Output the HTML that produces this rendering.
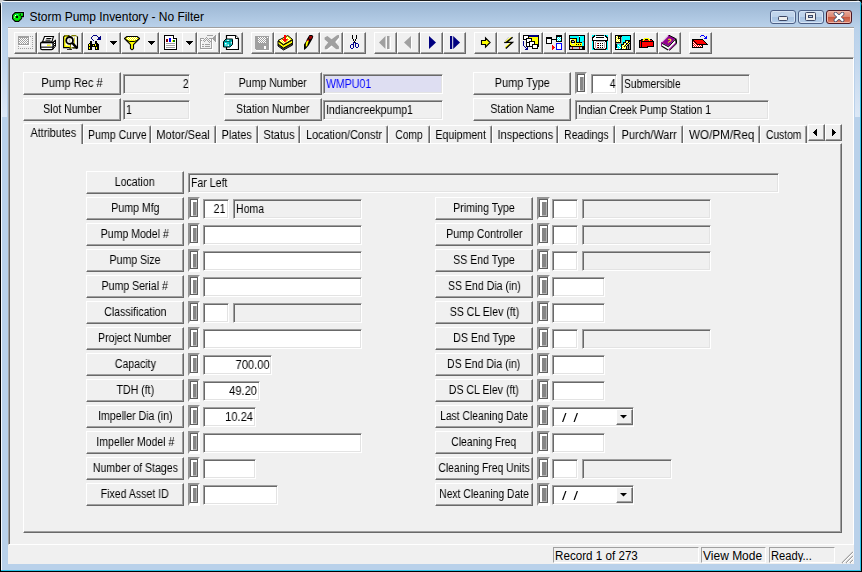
<!DOCTYPE html>
<html><head><meta charset="utf-8"><title>Storm Pump Inventory - No Filter</title>
<style>
html,body{margin:0;padding:0}
body{width:862px;height:572px;overflow:hidden;background:#000;position:relative;font-family:"Liberation Sans",sans-serif;font-size:12px;color:#000}
div{position:absolute;box-sizing:border-box}
.t{display:inline-block;white-space:pre;will-change:transform}
#frame{left:0;top:0;width:862px;height:572px;background:#b9d1ea;border-radius:6px 6px 0 0;overflow:hidden}
#cap{left:0;top:0;width:862px;height:27px;background:linear-gradient(#99b4d1,#b9d1ea)}
#title{left:29.5px;letter-spacing:-0.03px;top:10px;line-height:15px;font-size:12px;white-space:pre}
#client{left:8px;top:27px;width:846px;height:537px;background:#f0f0f0}
.btn{background:#f0f0f0;border-top:1px solid #fff;border-left:1px solid #fff;border-right:1px solid #696969;border-bottom:1px solid #696969;box-shadow:inset -1px -1px 0 #a0a0a0}
.bl{left:0;right:0;height:21px;line-height:21px;display:flex;justify-content:center;white-space:pre}
.fld{border-top:1px solid #a0a0a0;border-left:1px solid #a0a0a0;border-right:1px solid #fff;border-bottom:1px solid #fff;box-shadow:inset 1px 1px 0 #696969,inset -1px -1px 0 #e3e3e3;overflow:hidden}
.ft{top:1px;line-height:16px;height:16px;white-space:pre}
.ind{width:12px;height:22px;border-top:2px solid #949494;border-left:2px solid #949494;border-right:2px solid #fff;border-bottom:2px solid #fff;background:#f0f0f0}
.ind i{position:absolute;left:0;top:0;width:8px;height:18px;background:#868686;border:1px solid #606060;box-shadow:inset 2px 2px 0 #fff,inset -1px -1px 0 #b4b4b4;box-sizing:border-box}
.cbtn{right:0;top:1px;width:17px;height:16px;background:#f0f0f0;border-top:1px solid #fff;border-left:1px solid #fff;border-right:1px solid #696969;border-bottom:1px solid #696969;box-shadow:inset -1px -1px 0 #a0a0a0}
.cbtn svg{position:absolute;left:3px;top:5px}
.tbb{background:#f0f0f0;border-top:1px solid #fff;border-left:1px solid #fff;border-right:1px solid #696969;border-bottom:1px solid #696969;box-shadow:inset -1px -1px 0 #a0a0a0}
.tab{border-radius:2px 2px 0 0;border-top:1px solid #fff;border-left:1px solid #fff;border-right:1px solid #696969;box-shadow:inset -1px 0 0 #a0a0a0;background:#f0f0f0}
.tabsel{border-radius:2px 2px 0 0;border-top:1px solid #fff;border-left:1px solid #fff;border-right:1px solid #696969;box-shadow:inset -1px 0 0 #a0a0a0;background:#f0f0f0;z-index:3}
.tl{left:0;right:0;height:14px;line-height:14px;display:flex;justify-content:center;white-space:pre;overflow:hidden}
#page{left:23px;top:143px;width:819px;height:390px;border-top:1px solid #fff;border-left:1px solid #fff;border-right:1px solid #696969;border-bottom:1px solid #696969;box-shadow:inset -1px -1px 0 #a0a0a0;background:#f0f0f0}
#mdi{left:8px;top:57px;width:846px;height:488px;border-top:1px solid #a0a0a0;border-left:1px solid #a0a0a0;border-right:1px solid #fff;border-bottom:1px solid #fff;box-shadow:inset 1px 1px 0 #696969;background:#f0f0f0}
.sp{top:547px;height:16px;border-top:1px solid #a0a0a0;border-left:1px solid #a0a0a0;border-right:1px solid #fff;border-bottom:1px solid #fff;line-height:14px;white-space:pre;overflow:hidden}
.sp span{position:absolute;left:1px;top:1px;transform:scaleX(.97);transform-origin:left center}
.cb{top:10px;width:26px;height:14px;border-radius:3px}
.ic{position:absolute;left:2px;top:2px}
</style></head><body>
<svg width="0" height="0" style="position:absolute"><defs>
<pattern id="ckw" width="2" height="2" patternUnits="userSpaceOnUse"><rect width="1" height="1" fill="#fff"/><rect x="1" y="1" width="1" height="1" fill="#fff"/></pattern>
<pattern id="ckw2" width="2" height="2" patternUnits="userSpaceOnUse"><rect x="1" width="1" height="1" fill="#fff"/><rect y="1" width="1" height="1" fill="#fff"/></pattern>
<pattern id="ckgr" width="2" height="2" patternUnits="userSpaceOnUse"><rect width="1" height="1" fill="#a0a0a0"/><rect x="1" y="1" width="1" height="1" fill="#a0a0a0"/></pattern>
<pattern id="ckr" width="2" height="2" patternUnits="userSpaceOnUse"><rect width="2" height="2" fill="#f00"/><rect width="1" height="1" fill="#fff"/><rect x="1" y="1" width="1" height="1" fill="#fff"/></pattern>
<pattern id="cky" width="2" height="2" patternUnits="userSpaceOnUse"><rect width="2" height="2" fill="#ff0"/><rect width="1" height="1" fill="#fff"/><rect x="1" y="1" width="1" height="1" fill="#fff"/></pattern>
<pattern id="ckc" width="2" height="2" patternUnits="userSpaceOnUse"><rect width="2" height="2" fill="#0ff"/><rect width="1" height="1" fill="#fff"/><rect x="1" y="1" width="1" height="1" fill="#fff"/></pattern>
<pattern id="ckg" width="2" height="2" patternUnits="userSpaceOnUse"><rect width="2" height="2" fill="#fff"/><rect width="1" height="1" fill="#000"/><rect x="1" y="1" width="1" height="1" fill="#000"/></pattern>
</defs></svg>
<div style="left:0;top:0;width:5px;height:3px;background:#d0d0d0"></div>
<div id="frame">
<div id="cap"></div>
<div style="left:0;top:0;width:862px;height:1px;background:#1c1c1c"></div>
<div style="left:0;top:0;width:1px;height:572px;background:#000"></div>
<div style="left:1px;top:1px;width:860px;height:1px;background:#f4f8fc"></div>
<div style="left:1px;top:1px;width:1px;height:570px;background:#f4f8fc"></div>
<div style="left:860px;top:2px;width:1px;height:569px;background:#2cc4e8"></div>
<div style="left:861px;top:0;width:1px;height:572px;background:#000"></div>
<div style="left:1px;top:570px;width:860px;height:1px;background:#2cc4e8"></div>
<div style="left:0;top:571px;width:862px;height:1px;background:#000"></div>
<div style="left:2px;top:27px;width:5px;height:90px;background:linear-gradient(#b9d1ea,#c4d8ee 40%,#dde8f6)"></div>
<div style="left:855px;top:27px;width:5px;height:90px;background:linear-gradient(#b9d1ea,#c4d8ee 40%,#dde8f6)"></div>
<svg style="position:absolute;left:11px;top:11px" width="14" height="12" viewBox="-1 -1 14 12"><path d="M0.6 3.2L3.2 0.6H11.4V4.6H9.6V6.4L6.6 9.4H3.2L0.6 6.8Z" fill="none" stroke="#c4dcf4" stroke-width="2.6" stroke-linejoin="round" opacity=".7"/><path d="M0.6 3.2L3.2 0.6H11.4V4.6H9.6V6.4L6.6 9.4H3.2L0.6 6.8Z" fill="#00f000" stroke="#000" stroke-width="1.2" stroke-linejoin="miter"/><path d="M8.8 2.2L7.6 3.2L8.8 4" fill="none" stroke="#000" stroke-width="1"/><path d="M6.5 8.8L9 6.2V4.8" fill="none" stroke="#00a000" stroke-width="1"/><rect x="4" y="4" width="2" height="2" fill="#000"/><rect x="3" y="3" width="1" height="1" fill="#fff"/><rect x="2" y="4.6" width="1" height="1" fill="#f8d8f0"/><rect x="4.6" y="2" width="1.2" height="1" fill="#30e0ff"/><rect x="9.4" y="1.4" width="1" height="1" fill="#40ff80"/></svg>
<div id="title">Storm Pump Inventory - No Filter</div>
<div class="cb" style="left:770px;border:1px solid #4b5f86;background:linear-gradient(#c3d6ed 0,#bfd3eb 50%,#a8c3e2 50%,#b4cde9 100%);box-shadow:inset 0 0 0 1px #d6e4f5"><div style="left:7px;top:5px;width:10px;height:5px;border:1px solid #3c4664;border-radius:1.5px;background:#eeeeee"></div></div>
<div class="cb" style="left:798px;border:1px solid #4b5f86;background:linear-gradient(#c3d6ed 0,#bfd3eb 50%,#a8c3e2 50%,#b4cde9 100%);box-shadow:inset 0 0 0 1px #d6e4f5"><div style="left:6px;top:1px;width:11px;height:9px;border:1px solid #3c4664;border-radius:1.5px;background:#eeeeee"><div style="left:2px;top:2px;width:5px;height:3px;border:1px solid #3c4664;background:#b8cfea"></div></div></div>
<div class="cb" style="left:826px;border:1px solid #4a1622;background:linear-gradient(#e9a898 0,#dd8672 50%,#c9553b 50%,#da8068 100%);box-shadow:inset 0 0 0 1px #f0b8aa"><svg style="position:absolute;left:6px;top:1px" width="12" height="10" viewBox="0 0 12 10"><path d="M2.6 1.8L9.4 8.2M9.4 1.8L2.6 8.2" stroke="#46506e" stroke-width="3.9" stroke-linecap="round"/><path d="M2.6 1.8L9.4 8.2M9.4 1.8L2.6 8.2" stroke="#fff" stroke-width="2.3" stroke-linecap="round"/></svg></div>
</div>
<div id="client"></div>
<div style="left:8px;top:27px;width:846px;height:1px;background:#a0a0a0"></div>
<div style="left:8px;top:28px;width:846px;height:1px;background:#fff"></div>
<div class="tbb" style="left:14px;top:32px;width:23px;height:22px"><svg class="ic" width="16" height="16" viewBox="0 0 16 16" shape-rendering="crispEdges" ><rect x="2" y="2" width="11" height="9" fill="#fff"/><rect x="1" y="1" width="11" height="9" fill="#a0a0a0"/><rect x="2" y="3" width="9" height="6" fill="url(#ckw2)"/><rect x="15" y="1" width="1" height="1" fill="#a0a0a0"/><rect x="14" y="1" width="1" height="1" fill="#a0a0a0" opacity=".0"/><rect x="15" y="3" width="1" height="1" fill="#a0a0a0"/><rect x="14" y="3" width="1" height="1" fill="#a0a0a0" opacity=".0"/><rect x="15" y="5" width="1" height="1" fill="#a0a0a0"/><rect x="14" y="5" width="1" height="1" fill="#a0a0a0" opacity=".0"/><rect x="15" y="7" width="1" height="1" fill="#a0a0a0"/><rect x="14" y="7" width="1" height="1" fill="#a0a0a0" opacity=".0"/><rect x="15" y="9" width="1" height="1" fill="#a0a0a0"/><rect x="14" y="9" width="1" height="1" fill="#a0a0a0" opacity=".0"/><rect x="15" y="11" width="1" height="1" fill="#a0a0a0"/><rect x="14" y="11" width="1" height="1" fill="#a0a0a0" opacity=".0"/><rect x="15" y="13" width="1" height="1" fill="#a0a0a0"/><rect x="14" y="13" width="1" height="1" fill="#a0a0a0" opacity=".0"/><rect x="1" y="13" width="1" height="1" fill="#a0a0a0"/><rect x="3" y="13" width="1" height="1" fill="#a0a0a0"/><rect x="5" y="13" width="1" height="1" fill="#a0a0a0"/><rect x="7" y="13" width="1" height="1" fill="#a0a0a0"/><rect x="9" y="13" width="1" height="1" fill="#a0a0a0"/><rect x="11" y="13" width="1" height="1" fill="#a0a0a0"/><rect x="13" y="13" width="1" height="1" fill="#a0a0a0"/><rect x="15" y="13" width="1" height="1" fill="#a0a0a0"/><rect x="1" y="11" width="1" height="1" fill="#a0a0a0"/><rect x="13" y="1" width="1" height="1" fill="#a0a0a0"/></svg></div>
<div class="tbb" style="left:37px;top:32px;width:23px;height:22px"><svg class="ic" width="16" height="16" viewBox="0 0 16 16"><path d="M4.5 1.5H13.5L11.8 7H2.5Z" fill="#fff" stroke="#000" stroke-width="1.1"/><path d="M6.3 3.5H11.3M5.5 5.2H10.5" stroke="#000" stroke-width="1"/><path d="M12.8 7.3L15.5 5V11L12.8 14.3Z" fill="url(#ckg)" stroke="#000" stroke-width="1"/><rect x="0.6" y="7" width="12.4" height="7.6" rx="1.6" fill="#fff" stroke="#000" stroke-width="1.2"/><rect x="1" y="7" width="12" height="1.3" fill="#000"/><rect x="1" y="11.6" width="12" height="1.1" fill="#000"/><rect x="7" y="9.6" width="3.6" height="1.3" fill="#ff0"/><rect x="7" y="9.2" width="3.6" height=".5" fill="#c0c0c0"/></svg></div>
<div class="tbb" style="left:60px;top:32px;width:23px;height:22px"><svg class="ic" width="16" height="16" viewBox="0 0 16 16"><path d="M0.6 1.8L2 0.6H5.5L7.5 1.8V13.6L6 12.6H0.6Z" fill="#ff0" stroke="#000" stroke-width="1.1"/><path d="M2.6 2V10.6H7V2.5Z" fill="#fff"/><path d="M7.5 1.8L9 0.6H12.8L14.4 1.8V12.6H9L7.5 13.6Z" fill="#fff" stroke="#808000" stroke-width="1"/><path d="M14.5 1.5V13H9.5" fill="none" stroke="#000" stroke-width="1.1"/><path d="M1.5 0.6H5.5M9 0.6H12.8" stroke="#808000" stroke-width="1.2"/><path d="M11.5 2.5V11" stroke="#c8c800" stroke-width=".8"/><circle cx="6.6" cy="5.4" r="3.4" fill="#fff" fill-opacity=".85" stroke="#000" stroke-width="1.8"/><path d="M6.3 3.5V7.2" stroke="#b0b0b0" stroke-width="1"/><path d="M9.3 8L14.3 13.4" stroke="#000" stroke-width="2.4"/><path d="M4 14.5H9" stroke="#000" stroke-width=".8"/></svg></div>
<div class="tbb" style="left:83px;top:32px;width:38px;height:22px"><svg class="ic" width="16" height="16" viewBox="0 0 16 16" shape-rendering="crispEdges" ><rect x="4" y="6" width="2" height="2" fill="#000"/><rect x="9" y="6" width="2" height="2" fill="#000"/><rect x="3" y="8" width="3" height="1" fill="#000"/><rect x="2" y="9" width="4" height="6" fill="#000"/><rect x="9" y="8" width="3" height="1" fill="#000"/><rect x="9" y="9" width="4" height="6" fill="#000"/><rect x="6" y="9" width="3" height="3" fill="#000"/><rect x="3" y="9" width="1" height="2" fill="#ff0"/><rect x="3" y="12" width="1" height="2" fill="#ff0"/><rect x="7" y="10" width="1" height="1" fill="#ff0"/><rect x="9" y="9" width="1" height="2" fill="#ff0"/><rect x="10" y="12" width="1" height="2" fill="#ff0"/><rect x="7" y="0" width="4" height="1" fill="#000080"/><rect x="6" y="1" width="1" height="1" fill="#000080"/><rect x="5" y="2" width="1" height="2" fill="#000080"/><rect x="6" y="4" width="1" height="1" fill="#000080"/><rect x="7" y="5" width="1" height="1" fill="#000080"/><rect x="11" y="1" width="1" height="1" fill="#000080"/><rect x="12" y="2" width="1" height="1" fill="#000080"/><rect x="14" y="1" width="1" height="1" fill="#000080"/><rect x="13" y="2" width="2" height="1" fill="#000080"/><rect x="12" y="3" width="3" height="1" fill="#000080"/><rect x="11" y="4" width="4" height="1" fill="#000080"/></svg><div style="left:22px;top:0;width:1px;height:19px;background:#fff"></div><svg style="position:absolute;left:26px;top:8px" width="7" height="4" viewBox="0 0 7 4" shape-rendering="crispEdges"><path d="M0 0h7v1h-1v1h-1v1h-1v1h-1v-1h-1v-1h-1v-1h-1z" fill="#000"/></svg></div>
<div class="tbb" style="left:121px;top:32px;width:38px;height:22px"><svg class="ic" width="16" height="16" viewBox="0 0 16 16"><path d="M0.5 3.5L3 1.5L13 1.5L15.6 3.5L9.5 9.6L9.5 13.6L8.3 14.6L7.7 14.6L6.5 13.6L6.5 9.6Z" fill="#ff0" stroke="#000" stroke-width="1.15" stroke-linejoin="round"/><rect x="3" y="2" width="10" height="3" fill="url(#cky)"/><path d="M1.3 4.4L3.5 5.5L5.3 6.5L10.7 6.5L12.5 5.5L14.7 4.4" fill="none" stroke="#000" stroke-width="1"/></svg><div style="left:22px;top:0;width:1px;height:19px;background:#fff"></div><svg style="position:absolute;left:26px;top:8px" width="7" height="4" viewBox="0 0 7 4" shape-rendering="crispEdges"><path d="M0 0h7v1h-1v1h-1v1h-1v1h-1v-1h-1v-1h-1v-1h-1z" fill="#000"/></svg></div>
<div class="tbb" style="left:159px;top:32px;width:38px;height:22px"><svg class="ic" width="16" height="16" viewBox="0 0 16 16" shape-rendering="crispEdges" ><g transform="translate(2,0)"><path d="M0.5 0.5H9.5L12.5 3.5V14.5H0.5Z" fill="#fff" stroke="#000"/><path d="M9.5 0.5V3.5H12.5" fill="#fff" stroke="#000"/><rect x="2" y="4" width="2" height="3" fill="#800000"/><rect x="5" y="3" width="2" height="4" fill="#00f"/><rect x="8" y="5" width="1" height="2" fill="#ff0"/><rect x="9" y="5" width="2" height="2" fill="#008000"/><rect x="2" y="8" width="9" height="1" fill="#a0a0a0"/><rect x="2" y="10" width="9" height="1" fill="#a0a0a0"/><rect x="2" y="12" width="9" height="1" fill="#a0a0a0"/></g></svg><div style="left:22px;top:0;width:1px;height:19px;background:#fff"></div><svg style="position:absolute;left:26px;top:8px" width="7" height="4" viewBox="0 0 7 4" shape-rendering="crispEdges"><path d="M0 0h7v1h-1v1h-1v1h-1v1h-1v-1h-1v-1h-1v-1h-1z" fill="#000"/></svg></div>
<div class="tbb" style="left:197px;top:32px;width:23px;height:22px"><svg class="ic" width="16" height="16" viewBox="0 0 16 16" shape-rendering="crispEdges" style="overflow:visible"><rect x="1.5" y="4.5" width="11" height="10" fill="none" stroke="#fff"/><rect x="0.5" y="3.5" width="11" height="10" fill="none" stroke="#a0a0a0"/><rect x="2" y="9" width="2" height="1" fill="#a0a0a0"/><rect x="5" y="9" width="5" height="1" fill="#a0a0a0"/><rect x="2" y="11" width="2" height="1" fill="#a0a0a0"/><rect x="5" y="11" width="5" height="1" fill="#a0a0a0"/><path d="M1.5 5.5L6.5 0.8L11.2 6.2L8.8 8.2L6.5 5.2L3.8 7.8Z" fill="#f0f0f0"/><path d="M1.5 5.5L6.5 0.8L11.2 6.2L8.8 8.2L6.5 5.2L3.8 7.8Z" fill="url(#ckgr)"/><rect x="7" y="0" width="6" height="1" fill="#a0a0a0"/><path d="M16.5 1V8L13.7 4.5Z" fill="#fff"/><path d="M16 -0.4V7.4L12.2 3.5Z" fill="#a0a0a0"/></svg></div>
<div class="tbb" style="left:220px;top:32px;width:23px;height:22px"><svg class="ic" width="16" height="16" viewBox="0 0 16 16"><path d="M3.5 0.5H12.5L15.5 3.5V14.5H3.5Z" fill="#fff" stroke="#000" stroke-width="1.2"/><path d="M12.5 0.5V3.5H15.5" fill="#fff" stroke="#000"/><path d="M0.5 6.5L3 4H9.5V9.5L7 12H0.5Z" fill="#00c8c8" stroke="#000" stroke-width="1"/><path d="M0.5 6.5H7V12M7 6.5L9.5 4" fill="none" stroke="#006868" stroke-width="1"/><rect x="2" y="8" width="1.5" height="1.5" fill="#fff"/><rect x="4.5" y="9.5" width="1.5" height="1.5" fill="#fff"/><rect x="4" y="4.8" width="2" height="1" fill="#fff"/><rect x="7.8" y="7" width="1" height="1.5" fill="#fff"/><rect x="2.5" y="10.2" width="1" height="1" fill="#e0ffff"/></svg></div>
<div class="tbb" style="left:251px;top:32px;width:23px;height:22px"><svg class="ic" width="16" height="16" viewBox="0 0 16 16" shape-rendering="crispEdges" ><rect x="2" y="2" width="14" height="14" fill="#fff"/><path d="M1 1H15V15H2L1 14Z" fill="#a0a0a0"/><rect x="4" y="2" width="8" height="6" fill="url(#ckw)"/><rect x="13" y="2" width="1" height="1" fill="#fff"/><rect x="10" y="11" width="2" height="3" fill="#fff"/></svg></div>
<div class="tbb" style="left:274px;top:32px;width:23px;height:22px"><svg class="ic" width="16" height="16" viewBox="0 0 16 16"><path d="M1 9L6.5 13L15.6 8V10L6.5 15L1 11Z" fill="#a0a0a0" stroke="#000" stroke-width="1"/><path d="M1 10L6.5 14L15.6 9" fill="none" stroke="#000" stroke-width=".7"/><path d="M1 6L6.5 10L15.6 5V8L6.5 13L1 9Z" fill="#ff0" stroke="#000" stroke-width="1"/><path d="M1 5.5L10.8 0.6L15.6 4.5L6.5 9.6Z" fill="#ff0" stroke="#000" stroke-width="1"/><path d="M2.5 5.6L10.6 1.6L14.2 4.5L6.6 8.6Z" fill="url(#cky)"/><path d="M7 0H9V4H11.2L8 7.6L4.8 4H7Z" fill="#f00"/></svg></div>
<div class="tbb" style="left:297px;top:32px;width:23px;height:22px"><svg class="ic" width="16" height="16" viewBox="0 0 16 16"><path d="M4 15L4 9.5L6 6.5L7 4L8.5 1.5L9.5 0L12.2 0L13.3 1.5L12.6 3.6L10.6 7L8.6 10.5L6 13.6Z" fill="#000"/><path d="M9.3 1L12.3 1L12 3L10.4 4.6L8.8 3.6Z" fill="#9a0000"/><path d="M7.6 4.4L9.2 4.8L8.6 6.2L7 6Z" fill="#f00"/><path d="M6.8 6L8.8 5.7L8.2 7.6L7 11.2L5.8 11.4L5.9 8Z" fill="#ff0"/></svg></div>
<div class="tbb" style="left:320px;top:32px;width:23px;height:22px"><svg class="ic" width="16" height="16" viewBox="0 0 16 16"><g transform="translate(1,1)"><path d="M1.6 2.4L4.4 1L8.6 4.3L14 0.2L16.4 -0.2L16.2 2.2L12.2 7L16 11.6L15.8 14.2L13.2 14.2L8.6 10.6L4 14.2L1.8 14.2L1.8 11.8L5.2 7.6L1.6 4.4Z" fill="#fff" /></g><path d="M1.6 2.4L4.4 1L8.6 4.3L14 0.2L16.4 -0.2L16.2 2.2L12.2 7L16 11.6L15.8 14.2L13.2 14.2L8.6 10.6L4 14.2L1.8 14.2L1.8 11.8L5.2 7.6L1.6 4.4Z" fill="#a0a0a0" /></svg></div>
<div class="tbb" style="left:343px;top:32px;width:23px;height:22px"><svg class="ic" width="16" height="16" viewBox="0 0 16 16" shape-rendering="crispEdges" ><rect x="6" y="0" width="1" height="4" fill="#000"/><rect x="7" y="4" width="1" height="2" fill="#000"/><rect x="8" y="6" width="1" height="2" fill="#000"/><rect x="10" y="0" width="1" height="4" fill="#000"/><rect x="9" y="4" width="1" height="2" fill="#000"/><rect x="7" y="7" width="1" height="6" fill="#000090"/><rect x="5" y="9" width="2" height="1" fill="#000090"/><rect x="4" y="10" width="1" height="3" fill="#000090"/><rect x="5" y="13" width="2" height="1" fill="#000090"/><rect x="9" y="7" width="1" height="5" fill="#000090"/><rect x="10" y="8" width="2" height="1" fill="#000090"/><rect x="12" y="9" width="1" height="3" fill="#000090"/><rect x="10" y="12" width="2" height="1" fill="#000090"/></svg></div>
<div class="tbb" style="left:374px;top:32px;width:23px;height:22px"><svg class="ic" width="16" height="16" viewBox="0 0 16 16"><path d="M3 8.5L9.5 2V15Z" fill="#fff"/><rect x="11" y="2" width="3" height="13" fill="#fff"/><path d="M2 7.5L8.5 1V14Z" fill="#a0a0a0"/><rect x="10" y="1" width="2.5" height="13" fill="#a0a0a0"/></svg></div>
<div class="tbb" style="left:397px;top:32px;width:23px;height:22px"><svg class="ic" width="16" height="16" viewBox="0 0 16 16"><path d="M5 8.5L12 2V15Z" fill="#fff"/><path d="M4 7.5L11 1V14Z" fill="#a0a0a0"/></svg></div>
<div class="tbb" style="left:420px;top:32px;width:23px;height:22px"><svg class="ic" width="16" height="16" viewBox="0 0 16 16"><path d="M6 1L13 7.5L6 14Z" fill="#000080"/></svg></div>
<div class="tbb" style="left:443px;top:32px;width:23px;height:22px"><svg class="ic" width="16" height="16" viewBox="0 0 16 16"><rect x="4" y="1" width="2.2" height="13" fill="#000080"/><path d="M7.2 1L14 7.5L7.2 14Z" fill="#000080"/></svg></div>
<div class="tbb" style="left:474px;top:32px;width:23px;height:22px"><svg class="ic" width="16" height="16" viewBox="0 0 16 16"><path d="M4.5 5.5H8.5V2.9L13.1 7.5L8.5 12.1V9.5H4.5Z" fill="#ff0" stroke="#000" stroke-width="1.1"/></svg></div>
<div class="tbb" style="left:497px;top:32px;width:23px;height:22px"><svg class="ic" width="16" height="16" viewBox="0 0 16 16"><path d="M8.8 2L5 6" fill="none" stroke="#c8c8c8" stroke-width=".9"/><path d="M11.4 2.4L5.6 6.8M10.6 8L5.4 12.4" fill="none" stroke="#ff0" stroke-width="1.3"/><path d="M12.6 2.2L6.4 7.4H12.4L5.8 13.4" fill="none" stroke="#000" stroke-width="1.4" stroke-linejoin="miter"/><path d="M4.2 7.5H7" stroke="#000" stroke-width="1.2"/></svg></div>
<div class="tbb" style="left:520px;top:32px;width:23px;height:22px"><svg class="ic" width="16" height="16" viewBox="0 0 16 16" shape-rendering="crispEdges" ><rect x="5" y="0" width="11" height="12" fill="#000"/><rect x="6" y="0" width="9" height="2" fill="#000080"/><rect x="6" y="2" width="9" height="7" fill="#ff0"/><rect x="0" y="0" width="6" height="5" fill="#000"/><rect x="1" y="1" width="4" height="3" fill="#fff"/><rect x="3" y="3" width="6" height="5" fill="#000"/><rect x="4" y="4" width="4" height="3" fill="#fff"/><rect x="3" y="7" width="4" height="5" fill="#000"/><rect x="4" y="8" width="2" height="3" fill="#fff"/><rect x="6" y="6" width="6" height="6" fill="#000"/><rect x="7" y="7" width="4" height="4" fill="#fff"/><rect x="9" y="9" width="6" height="5" fill="#000"/><rect x="10" y="10" width="4" height="3" fill="#fff"/><rect x="0" y="6" width="1" height="5" fill="#000090"/><rect x="1" y="11" width="1" height="1" fill="#000090"/><rect x="2" y="12" width="1" height="1" fill="#000090"/><rect x="3" y="13" width="1" height="1" fill="#000090"/><rect x="2" y="14" width="3" height="1" fill="#000090"/><rect x="4" y="12" width="1" height="2" fill="#000090"/></svg></div>
<div class="tbb" style="left:543px;top:32px;width:23px;height:22px"><svg class="ic" width="16" height="16" viewBox="0 0 16 16" shape-rendering="crispEdges" ><rect x="0" y="2" width="6" height="7" fill="#000"/><rect x="1" y="4" width="4" height="4" fill="#fff"/><rect x="6" y="4" width="4" height="1" fill="#000"/><rect x="10" y="0" width="6" height="7" fill="#000"/><rect x="11" y="2" width="4" height="4" fill="url(#ckc)"/><rect x="10" y="8" width="6" height="7" fill="#00f"/><rect x="11" y="9" width="4" height="5" fill="#fff"/><path d="M6 10L9 12.5L6 15Z" fill="#f00"/></svg></div>
<div class="tbb" style="left:566px;top:32px;width:23px;height:22px"><svg class="ic" width="16" height="16" viewBox="0 0 16 16" shape-rendering="crispEdges" ><rect x="0" y="0" width="16" height="15" fill="#000"/><rect x="1" y="1" width="14" height="2" fill="#0ff"/><rect x="8" y="3" width="2" height="4" fill="#0ff"/><rect x="11" y="3" width="2" height="4" fill="#0ff"/><rect x="13" y="3" width="2" height="8" fill="#0ff"/><rect x="10" y="1" width="1" height="6" fill="#000"/><rect x="10" y="1" width="1" height="1" fill="#fff"/><rect x="1" y="4" width="6" height="7" fill="#ff0"/><rect x="7" y="8" width="1" height="3" fill="#ff0"/><rect x="8" y="8" width="5" height="3" fill="#ff0"/><rect x="1" y="10" width="1" height="1" fill="#000"/><rect x="2" y="5" width="4" height="3" fill="#000"/><rect x="3" y="6" width="2" height="1" fill="#c0c0c0"/><rect x="5" y="5" width="1" height="1" fill="#c0c0c0"/><rect x="1" y="4" width="2" height="1" fill="#fff"/><rect x="1" y="5" width="1" height="1" fill="#fff"/><rect x="3" y="8" width="2" height="1" fill="#e0e0ff"/><rect x="7" y="9" width="1" height="1" fill="#000"/><rect x="9" y="9" width="1" height="1" fill="#000"/><rect x="11" y="9" width="1" height="1" fill="#000"/><rect x="1" y="12" width="12" height="2" fill="#c0c0c0"/><rect x="3" y="12" width="1" height="2" fill="#c00000"/><rect x="10" y="12" width="1" height="2" fill="#c00000"/><rect x="14" y="6" width="1" height="1" fill="#c06060"/></svg></div>
<div class="tbb" style="left:589px;top:32px;width:23px;height:22px"><svg class="ic" width="16" height="16" viewBox="0 0 16 16" shape-rendering="crispEdges" ><rect x="0" y="0" width="16" height="15" fill="#0ff"/><path d="M0.5 5.5V3L3 0.5H13L15.5 3V5.5Z" fill="#fff" stroke="#000" stroke-width="1"/><rect x="3" y="0" width="1" height="1" fill="#0ff"/><rect x="12" y="0" width="1" height="1" fill="#0ff"/><rect x="4" y="2" width="8" height="1" fill="#000"/><rect x="1.5" y="5.5" width="13" height="9" rx="2.2" fill="#fff" stroke="#000" stroke-width="1.2"/><rect x="3.5" y="6.6" width="9" height="7" rx="1.5" fill="#fff" stroke="#909090" stroke-width=".7"/><rect x="5" y="8" width="1" height="1" fill="#d00000"/><rect x="6" y="8" width="1" height="1" fill="#000"/><rect x="8" y="8" width="1" height="1" fill="#000"/><rect x="10" y="8" width="1" height="1" fill="#000"/><rect x="5" y="10" width="1" height="1" fill="#d00000"/><rect x="6" y="10" width="1" height="1" fill="#000"/><rect x="8" y="10" width="1" height="1" fill="#000"/><rect x="10" y="10" width="1" height="1" fill="#000"/><rect x="5" y="12" width="1" height="1" fill="#d00000"/><rect x="6" y="12" width="1" height="1" fill="#000"/><rect x="8" y="12" width="1" height="1" fill="#000"/><rect x="10" y="12" width="1" height="1" fill="#000"/><rect x="13" y="13" width="1" height="1" fill="#d00000"/></svg></div>
<div class="tbb" style="left:612px;top:32px;width:23px;height:22px"><svg class="ic" width="16" height="16" viewBox="0 0 16 16" shape-rendering="crispEdges" ><rect x="0" y="0" width="16" height="15" fill="#000"/><rect x="1" y="1" width="2" height="3" fill="url(#cky)"/><rect x="1" y="4" width="4" height="3" fill="url(#cky)"/><rect x="4" y="2" width="1" height="1" fill="#ff0"/><rect x="6" y="2" width="1" height="6" fill="#a0a0a0"/><rect x="1" y="8" width="6" height="1" fill="#a0a0a0"/><rect x="7" y="1" width="8" height="4" fill="#0ff"/><rect x="7" y="5" width="3" height="2" fill="#0ff"/><rect x="7" y="7" width="1" height="2" fill="#0ff"/><rect x="2" y="9" width="4" height="5" fill="#0ff"/><rect x="3" y="10" width="1" height="1" fill="#fff"/><rect x="4" y="11" width="1" height="1" fill="#fff"/><rect x="5" y="12" width="1" height="1" fill="#fff"/><rect x="4" y="13" width="1" height="1" fill="#fff"/><rect x="1" y="13" width="2" height="1" fill="#fff"/><rect x="11" y="6" width="2" height="2" fill="url(#cky)"/><rect x="9" y="8" width="2" height="2" fill="url(#cky)"/><rect x="7" y="10" width="2" height="4" fill="url(#cky)"/><rect x="9" y="12" width="2" height="2" fill="url(#cky)"/><rect x="14" y="7" width="1" height="1" fill="#ff0"/><rect x="13" y="8" width="1" height="1" fill="#fff"/><rect x="12" y="9" width="1" height="1" fill="#ff0"/><rect x="11" y="10" width="1" height="1" fill="#fff"/><rect x="10" y="11" width="1" height="1" fill="#ff0"/><rect x="9" y="10" width="1" height="1" fill="#ff0"/><rect x="12" y="7" width="1" height="1" fill="#ff0"/><rect x="12" y="11" width="1" height="3" fill="#a0a0a0"/><rect x="14" y="9" width="1" height="5" fill="#a0a0a0"/></svg></div>
<div class="tbb" style="left:635px;top:32px;width:23px;height:22px"><svg class="ic" width="16" height="16" viewBox="0 0 16 16" shape-rendering="crispEdges" ><rect x="3" y="4" width="11" height="1" fill="#000"/><rect x="2" y="5" width="13" height="1" fill="#000"/><rect x="1" y="6" width="15" height="6" fill="#000"/><rect x="1" y="12" width="9" height="1" fill="#000"/><rect x="1" y="5" width="1" height="1" fill="#000"/><rect x="14" y="5" width="1" height="1" fill="#000"/><rect x="4" y="5" width="10" height="1" fill="#f00"/><rect x="2" y="6" width="1" height="6" fill="#f00"/><rect x="4" y="7" width="11" height="4" fill="#f00"/><rect x="4" y="11" width="5" height="1" fill="#f00"/><rect x="6" y="3" width="5" height="1" fill="#ff0"/><rect x="5" y="4" width="2" height="1" fill="#ff0"/><rect x="10" y="4" width="2" height="1" fill="#ff0"/><rect x="5" y="5" width="1" height="1" fill="#ff0"/><rect x="11" y="5" width="1" height="1" fill="#ff0"/><rect x="7" y="4" width="3" height="1" fill="#000"/></svg></div>
<div class="tbb" style="left:658px;top:32px;width:23px;height:22px"><svg class="ic" width="16" height="16" viewBox="0 0 16 16"><path d="M0.5 8.5L7.5 12V14.9L0.6 11.2Z" fill="#fff"/><path d="M7.5 12L14.6 4.5L15.6 8.2L8.2 15.2Z" fill="#fff"/><path d="M0.5 11L7.2 14.9" stroke="#000" stroke-width="1.2"/><path d="M7.8 14.9L15.3 7.7" stroke="#920092" stroke-width="1.2"/><path d="M8.4 15.6L15.8 8.5" stroke="#000" stroke-width=".8"/><path d="M7.5 0L14.5 3.5L7.5 11.2L0.2 7.5Z" fill="#920092"/><path d="M0.4 8.1L7.5 11.8L14.5 4.2" fill="none" stroke="#000" stroke-width="1"/><path d="M7.8 0.2L14.6 3.6" stroke="#000" stroke-width="1"/><path d="M14.6 3.6L15.7 8.2" stroke="#000" stroke-width="1.7"/><path d="M0.5 7.5V11" stroke="#920092" stroke-width="1"/><rect x="1.2" y="6.2" width=".9" height=".9" fill="#fff"/><rect x="2.2" y="5.2" width=".9" height=".9" fill="#fff"/><rect x="3.2" y="4.2" width=".9" height=".9" fill="#fff"/><rect x="4.2" y="3.2" width=".9" height=".9" fill="#fff"/><rect x="5.2" y="2.2" width=".9" height=".9" fill="#fff"/><rect x="6.2" y="1.2000000000000002" width=".9" height=".9" fill="#fff"/><text x="6.2" y="8.3" font-family="Liberation Sans,sans-serif" font-weight="bold" font-size="6.6" fill="#ff0" transform="rotate(20 8 6)">?</text></svg></div>
<div class="tbb" style="left:689px;top:32px;width:23px;height:22px"><svg class="ic" width="16" height="16" viewBox="0 0 16 16" shape-rendering="crispEdges" ><rect x="0" y="4" width="11" height="9" fill="#000"/><rect x="1" y="5" width="9" height="7" fill="url(#ckr)"/><rect x="2" y="5" width="9" height="1" fill="#f00"/><rect x="3" y="6" width="9" height="1" fill="#f00"/><rect x="4" y="7" width="9" height="1" fill="#f00"/><rect x="5" y="8" width="9" height="1" fill="#f00"/><rect x="1" y="5" width="1" height="1" fill="#000"/><rect x="2" y="6" width="1" height="1" fill="#000"/><rect x="3" y="7" width="1" height="1" fill="#000"/><rect x="4" y="8" width="1" height="1" fill="#000"/><rect x="11" y="5" width="1" height="1" fill="#000"/><rect x="12" y="6" width="1" height="1" fill="#000"/><rect x="13" y="7" width="1" height="1" fill="#000"/><rect x="14" y="8" width="1" height="1" fill="#000"/><rect x="15" y="9" width="1" height="1" fill="#000"/><rect x="5" y="9" width="11" height="1" fill="#000"/><rect x="9" y="0" width="3" height="1" fill="#00f"/><rect x="8" y="1" width="1" height="1" fill="#00f"/><rect x="12" y="1" width="1" height="1" fill="#00f"/><rect x="14" y="1" width="1" height="3" fill="#00f"/><rect x="13" y="2" width="1" height="2" fill="#00f"/><rect x="12" y="3" width="1" height="1" fill="#00f"/></svg></div>
<div id="mdi"></div>
<div id="page"></div>
<div class="tabsel" style="left:23px;top:123px;width:60px;height:21px"><div class="tl" style="top:2px"><span class="t" style="transform:scaleX(0.9);transform-origin:center center">Attributes</span></div></div>
<div class="tab" style="left:83px;top:125px;width:68px;height:18px"><div class="tl" style="top:2px"><span class="t" style="transform:scaleX(0.88);transform-origin:center center">Pump Curve</span></div></div>
<div class="tab" style="left:151px;top:125px;width:65px;height:18px"><div class="tl" style="top:2px"><span class="t" style="transform:scaleX(0.92);transform-origin:center center">Motor/Seal</span></div></div>
<div class="tab" style="left:216px;top:125px;width:42px;height:18px"><div class="tl" style="top:2px"><span class="t" style="transform:scaleX(0.905);transform-origin:center center">Plates</span></div></div>
<div class="tab" style="left:258px;top:125px;width:42px;height:18px"><div class="tl" style="top:2px"><span class="t" style="transform:scaleX(0.92);transform-origin:center center">Status</span></div></div>
<div class="tab" style="left:300px;top:125px;width:88px;height:18px"><div class="tl" style="top:2px"><span class="t" style="transform:scaleX(0.905);transform-origin:center center">Location/Constr</span></div></div>
<div class="tab" style="left:388px;top:125px;width:42px;height:18px"><div class="tl" style="top:2px"><span class="t" style="transform:scaleX(0.85);transform-origin:center center">Comp</span></div></div>
<div class="tab" style="left:430px;top:125px;width:62px;height:18px"><div class="tl" style="top:2px"><span class="t" style="transform:scaleX(0.88);transform-origin:center center">Equipment</span></div></div>
<div class="tab" style="left:492px;top:125px;width:66px;height:18px"><div class="tl" style="top:2px"><span class="t" style="transform:scaleX(0.915);transform-origin:center center">Inspections</span></div></div>
<div class="tab" style="left:558px;top:125px;width:57px;height:18px"><div class="tl" style="top:2px"><span class="t" style="transform:scaleX(0.88);transform-origin:center center">Readings</span></div></div>
<div class="tab" style="left:615px;top:125px;width:68px;height:18px"><div class="tl" style="top:2px"><span class="t" style="transform:scaleX(0.915);transform-origin:center center">Purch/Warr</span></div></div>
<div class="tab" style="left:683px;top:125px;width:77px;height:18px"><div class="tl" style="top:2px"><span class="t" style="transform:scaleX(0.97);transform-origin:center center">WO/PM/Req</span></div></div>
<div class="tab" style="left:760px;top:125px;width:47px;height:18px"><div class="tl" style="top:2px"><span class="t" style="transform:scaleX(0.86);transform-origin:center center">Custom</span></div></div>
<div style="left:808px;top:124px;width:17px;height:17px" class="tbb"><svg style="position:absolute;left:4px;top:4px" width="4" height="7" viewBox="0 0 4 7" shape-rendering="crispEdges"><path d="M4 0v7h-1v-1h-1v-1h-1v-1h-1v-1h1v-1h1v-1h1v-1z" fill="#000"/></svg></div>
<div style="left:825px;top:124px;width:17px;height:17px" class="tbb"><svg style="position:absolute;left:6px;top:4px" width="4" height="7" viewBox="0 0 4 7" shape-rendering="crispEdges"><path d="M0 0v7h1v-1h1v-1h1v-1h1v-1h-1v-1h-1v-1h-1v-1z" fill="#000"/></svg></div>
<div class="btn" style="left:23px;top:72px;width:98px;height:23px"><div class="bl" style="top:0px"><span class="t" style="transform:scaleX(0.93);transform-origin:center center">Pump Rec #</span></div></div>
<div class="fld" style="left:123px;top:74px;width:67px;height:20px;background:#f0f0f0"><div class="ft" style="right:0.5px;color:#000"><span class="t" style="transform:scaleX(0.88);transform-origin:right center">2</span></div></div>
<div class="btn" style="left:23px;top:98px;width:98px;height:23px"><div class="bl" style="top:0px"><span class="t" style="transform:scaleX(0.875);transform-origin:center center">Slot Number</span></div></div>
<div class="fld" style="left:123px;top:100px;width:67px;height:20px;background:#f0f0f0"><div class="ft" style="left:1.5px;color:#000"><span class="t" style="transform:scaleX(0.88);transform-origin:left center">1</span></div></div>
<div class="btn" style="left:224px;top:72px;width:98px;height:23px"><div class="bl" style="top:0px"><span class="t" style="transform:scaleX(0.88);transform-origin:center center">Pump Number</span></div></div>
<div class="fld" style="left:323px;top:74px;width:120px;height:20px;background:#dedef2"><div class="ft" style="left:1.5px;color:#0000ff"><span class="t" style="transform:scaleX(0.88);transform-origin:left center">WMPU01</span></div></div>
<div class="btn" style="left:224px;top:98px;width:98px;height:23px"><div class="bl" style="top:0px"><span class="t" style="transform:scaleX(0.88);transform-origin:center center">Station Number</span></div></div>
<div class="fld" style="left:323px;top:100px;width:120px;height:20px;background:#f0f0f0"><div class="ft" style="left:1.5px;color:#000"><span class="t" style="transform:scaleX(0.88);transform-origin:left center">Indiancreekpump1</span></div></div>
<div class="btn" style="left:473px;top:72px;width:98px;height:23px"><div class="bl" style="top:0px"><span class="t" style="transform:scaleX(0.91);transform-origin:center center">Pump Type</span></div></div>
<div class="ind" style="left:575px;top:72px;width:12px;height:22px;border-bottom-width:2px"><i style="width:8px"></i></div>
<div class="fld" style="left:591px;top:74px;width:26px;height:20px;background:#fff"><div class="ft" style="right:0.5px;color:#000"><span class="t" style="transform:scaleX(0.88);transform-origin:right center">4</span></div></div>
<div class="fld" style="left:621px;top:74px;width:129px;height:20px;background:#f0f0f0"><div class="ft" style="left:1.5px;color:#000"><span class="t" style="transform:scaleX(0.85);transform-origin:left center">Submersible</span></div></div>
<div class="btn" style="left:473px;top:98px;width:98px;height:23px"><div class="bl" style="top:0px"><span class="t" style="transform:scaleX(0.88);transform-origin:center center">Station Name</span></div></div>
<div class="fld" style="left:575px;top:100px;width:194px;height:20px;background:#f0f0f0"><div class="ft" style="left:1.5px;color:#000"><span class="t" style="transform:scaleX(0.867);transform-origin:left center">Indian Creek Pump Station 1</span></div></div>
<div class="btn" style="left:86px;top:171px;width:98px;height:23px"><div class="bl" style="top:0px"><span class="t" style="transform:scaleX(0.88);transform-origin:center center">Location</span></div></div>
<div class="fld" style="left:188px;top:173px;width:591px;height:20px;background:#f0f0f0"><div class="ft" style="left:1.5px;color:#000"><span class="t" style="transform:scaleX(0.88);transform-origin:left center">Far Left</span></div></div>
<div class="btn" style="left:86px;top:197px;width:98px;height:23px"><div class="bl" style="top:0px"><span class="t" style="transform:scaleX(0.88);transform-origin:center center">Pump Mfg</span></div></div>
<div class="ind" style="left:188px;top:197px;width:12px;height:23px;border-bottom-width:3px"><i style="width:8px"></i></div>
<div class="fld" style="left:203px;top:199px;width:26px;height:20px;background:#fff"><div class="ft" style="right:3px;color:#000"><span class="t" style="transform:scaleX(0.88);transform-origin:right center">21</span></div></div>
<div class="fld" style="left:233px;top:199px;width:129px;height:20px;background:#f0f0f0"><div class="ft" style="left:1.5px;color:#000"><span class="t" style="transform:scaleX(0.88);transform-origin:left center">Homa</span></div></div>
<div class="btn" style="left:86px;top:223px;width:98px;height:23px"><div class="bl" style="top:0px"><span class="t" style="transform:scaleX(0.88);transform-origin:center center">Pump Model #</span></div></div>
<div class="ind" style="left:188px;top:223px;width:12px;height:23px;border-bottom-width:3px"><i style="width:8px"></i></div>
<div class="fld" style="left:203px;top:225px;width:159px;height:20px;background:#fff"></div>
<div class="btn" style="left:86px;top:249px;width:98px;height:23px"><div class="bl" style="top:0px"><span class="t" style="transform:scaleX(0.88);transform-origin:center center">Pump Size</span></div></div>
<div class="ind" style="left:188px;top:249px;width:12px;height:23px;border-bottom-width:3px"><i style="width:8px"></i></div>
<div class="fld" style="left:203px;top:251px;width:159px;height:20px;background:#fff"></div>
<div class="btn" style="left:86px;top:275px;width:98px;height:23px"><div class="bl" style="top:0px"><span class="t" style="transform:scaleX(0.88);transform-origin:center center">Pump Serial #</span></div></div>
<div class="ind" style="left:188px;top:275px;width:12px;height:23px;border-bottom-width:3px"><i style="width:8px"></i></div>
<div class="fld" style="left:203px;top:277px;width:159px;height:20px;background:#fff"></div>
<div class="btn" style="left:86px;top:301px;width:98px;height:23px"><div class="bl" style="top:0px"><span class="t" style="transform:scaleX(0.88);transform-origin:center center">Classification</span></div></div>
<div class="ind" style="left:188px;top:301px;width:12px;height:23px;border-bottom-width:3px"><i style="width:8px"></i></div>
<div class="fld" style="left:203px;top:303px;width:26px;height:20px;background:#fff"></div>
<div class="fld" style="left:233px;top:303px;width:129px;height:20px;background:#f0f0f0"></div>
<div class="btn" style="left:86px;top:327px;width:98px;height:23px"><div class="bl" style="top:0px"><span class="t" style="transform:scaleX(0.88);transform-origin:center center">Project Number</span></div></div>
<div class="ind" style="left:188px;top:327px;width:12px;height:23px;border-bottom-width:3px"><i style="width:8px"></i></div>
<div class="fld" style="left:203px;top:329px;width:159px;height:20px;background:#fff"></div>
<div class="btn" style="left:86px;top:353px;width:98px;height:23px"><div class="bl" style="top:0px"><span class="t" style="transform:scaleX(0.88);transform-origin:center center">Capacity</span></div></div>
<div class="ind" style="left:188px;top:353px;width:12px;height:23px;border-bottom-width:3px"><i style="width:8px"></i></div>
<div class="fld" style="left:203px;top:355px;width:69px;height:20px;background:#fff"><div class="ft" style="right:1.5px;color:#000"><span class="t" style="transform:scaleX(0.93);transform-origin:right center">700.00</span></div></div>
<div class="btn" style="left:86px;top:379px;width:98px;height:23px"><div class="bl" style="top:0px"><span class="t" style="transform:scaleX(0.88);transform-origin:center center">TDH (ft)</span></div></div>
<div class="ind" style="left:188px;top:379px;width:12px;height:23px;border-bottom-width:3px"><i style="width:8px"></i></div>
<div class="fld" style="left:203px;top:381px;width:57px;height:20px;background:#fff"><div class="ft" style="right:1.5px;color:#000"><span class="t" style="transform:scaleX(0.93);transform-origin:right center">49.20</span></div></div>
<div class="btn" style="left:86px;top:405px;width:98px;height:23px"><div class="bl" style="top:0px"><span class="t" style="transform:scaleX(0.88);transform-origin:center center">Impeller Dia (in)</span></div></div>
<div class="ind" style="left:188px;top:405px;width:12px;height:23px;border-bottom-width:3px"><i style="width:8px"></i></div>
<div class="fld" style="left:203px;top:407px;width:53px;height:20px;background:#fff"><div class="ft" style="right:1.5px;color:#000"><span class="t" style="transform:scaleX(0.93);transform-origin:right center">10.24</span></div></div>
<div class="btn" style="left:86px;top:431px;width:98px;height:23px"><div class="bl" style="top:0px"><span class="t" style="transform:scaleX(0.88);transform-origin:center center">Impeller Model #</span></div></div>
<div class="ind" style="left:188px;top:431px;width:12px;height:23px;border-bottom-width:3px"><i style="width:8px"></i></div>
<div class="fld" style="left:203px;top:433px;width:159px;height:20px;background:#fff"></div>
<div class="btn" style="left:86px;top:457px;width:98px;height:23px"><div class="bl" style="top:0px"><span class="t" style="transform:scaleX(0.88);transform-origin:center center">Number of Stages</span></div></div>
<div class="ind" style="left:188px;top:457px;width:12px;height:23px;border-bottom-width:3px"><i style="width:8px"></i></div>
<div class="fld" style="left:203px;top:459px;width:53px;height:20px;background:#fff"></div>
<div class="btn" style="left:86px;top:483px;width:98px;height:23px"><div class="bl" style="top:0px"><span class="t" style="transform:scaleX(0.88);transform-origin:center center">Fixed Asset ID</span></div></div>
<div class="ind" style="left:188px;top:483px;width:12px;height:23px;border-bottom-width:3px"><i style="width:8px"></i></div>
<div class="fld" style="left:203px;top:485px;width:75px;height:20px;background:#fff"></div>
<div class="btn" style="left:435px;top:197px;width:98px;height:23px"><div class="bl" style="top:0px"><span class="t" style="transform:scaleX(0.88);transform-origin:center center">Priming Type</span></div></div>
<div class="ind" style="left:537px;top:197px;width:13px;height:23px;border-bottom-width:3px"><i style="width:9px"></i></div>
<div class="fld" style="left:552px;top:199px;width:26px;height:20px;background:#fff"></div>
<div class="fld" style="left:582px;top:199px;width:129px;height:20px;background:#f0f0f0"></div>
<div class="btn" style="left:435px;top:223px;width:98px;height:23px"><div class="bl" style="top:0px"><span class="t" style="transform:scaleX(0.88);transform-origin:center center">Pump Controller</span></div></div>
<div class="ind" style="left:537px;top:223px;width:13px;height:23px;border-bottom-width:3px"><i style="width:9px"></i></div>
<div class="fld" style="left:552px;top:225px;width:26px;height:20px;background:#fff"></div>
<div class="fld" style="left:582px;top:225px;width:129px;height:20px;background:#f0f0f0"></div>
<div class="btn" style="left:435px;top:249px;width:98px;height:23px"><div class="bl" style="top:0px"><span class="t" style="transform:scaleX(0.88);transform-origin:center center">SS End Type</span></div></div>
<div class="ind" style="left:537px;top:249px;width:13px;height:23px;border-bottom-width:3px"><i style="width:9px"></i></div>
<div class="fld" style="left:552px;top:251px;width:26px;height:20px;background:#fff"></div>
<div class="fld" style="left:582px;top:251px;width:129px;height:20px;background:#f0f0f0"></div>
<div class="btn" style="left:435px;top:275px;width:98px;height:23px"><div class="bl" style="top:0px"><span class="t" style="transform:scaleX(0.88);transform-origin:center center">SS End Dia (in)</span></div></div>
<div class="ind" style="left:537px;top:275px;width:13px;height:23px;border-bottom-width:3px"><i style="width:9px"></i></div>
<div class="fld" style="left:552px;top:277px;width:53px;height:20px;background:#fff"></div>
<div class="btn" style="left:435px;top:301px;width:98px;height:23px"><div class="bl" style="top:0px"><span class="t" style="transform:scaleX(0.88);transform-origin:center center">SS CL Elev (ft)</span></div></div>
<div class="ind" style="left:537px;top:301px;width:13px;height:23px;border-bottom-width:3px"><i style="width:9px"></i></div>
<div class="fld" style="left:552px;top:303px;width:53px;height:20px;background:#fff"></div>
<div class="btn" style="left:435px;top:327px;width:98px;height:23px"><div class="bl" style="top:0px"><span class="t" style="transform:scaleX(0.88);transform-origin:center center">DS End Type</span></div></div>
<div class="ind" style="left:537px;top:327px;width:13px;height:23px;border-bottom-width:3px"><i style="width:9px"></i></div>
<div class="fld" style="left:552px;top:329px;width:26px;height:20px;background:#fff"></div>
<div class="fld" style="left:582px;top:329px;width:129px;height:20px;background:#f0f0f0"></div>
<div class="btn" style="left:435px;top:353px;width:98px;height:23px"><div class="bl" style="top:0px"><span class="t" style="transform:scaleX(0.88);transform-origin:center center">DS End Dia (in)</span></div></div>
<div class="ind" style="left:537px;top:353px;width:13px;height:23px;border-bottom-width:3px"><i style="width:9px"></i></div>
<div class="fld" style="left:552px;top:355px;width:53px;height:20px;background:#fff"></div>
<div class="btn" style="left:435px;top:379px;width:98px;height:23px"><div class="bl" style="top:0px"><span class="t" style="transform:scaleX(0.88);transform-origin:center center">DS CL Elev (ft)</span></div></div>
<div class="ind" style="left:537px;top:379px;width:13px;height:23px;border-bottom-width:3px"><i style="width:9px"></i></div>
<div class="fld" style="left:552px;top:381px;width:53px;height:20px;background:#fff"></div>
<div class="btn" style="left:435px;top:405px;width:98px;height:23px"><div class="bl" style="top:0px"><span class="t" style="transform:scaleX(0.86);transform-origin:center center">Last Cleaning Date</span></div></div>
<div class="ind" style="left:537px;top:405px;width:13px;height:23px;border-bottom-width:3px"><i style="width:9px"></i></div>
<div class="fld" style="left:552px;top:407px;width:82px;height:20px;background:#fff"><div class="ft" style="left:9px;top:1.5px;white-space:pre;font-size:13.5px;letter-spacing:1.05px"><span class="t" style="transform:scaleX(1.2);transform-origin:left center">/ /</span></div><div class="cbtn"><svg width="7" height="4" viewBox="0 0 7 4"><path d="M0 0h7L3.5 3.5z" fill="#000"/></svg></div></div>
<div class="btn" style="left:435px;top:431px;width:98px;height:23px"><div class="bl" style="top:0px"><span class="t" style="transform:scaleX(0.86);transform-origin:center center">Cleaning Freq</span></div></div>
<div class="ind" style="left:537px;top:431px;width:13px;height:23px;border-bottom-width:3px"><i style="width:9px"></i></div>
<div class="fld" style="left:552px;top:433px;width:53px;height:20px;background:#fff"></div>
<div class="btn" style="left:435px;top:457px;width:98px;height:23px"><div class="bl" style="top:0px"><span class="t" style="transform:scaleX(0.86);transform-origin:center center">Cleaning Freq Units</span></div></div>
<div class="ind" style="left:537px;top:457px;width:13px;height:23px;border-bottom-width:3px"><i style="width:9px"></i></div>
<div class="fld" style="left:552px;top:459px;width:26px;height:20px;background:#fff"></div>
<div class="fld" style="left:582px;top:459px;width:90px;height:20px;background:#f0f0f0"></div>
<div class="btn" style="left:435px;top:483px;width:98px;height:23px"><div class="bl" style="top:0px"><span class="t" style="transform:scaleX(0.86);transform-origin:center center">Next Cleaning Date</span></div></div>
<div class="ind" style="left:537px;top:483px;width:13px;height:23px;border-bottom-width:3px"><i style="width:9px"></i></div>
<div class="fld" style="left:552px;top:485px;width:82px;height:20px;background:#fff"><div class="ft" style="left:9px;top:1.5px;white-space:pre;font-size:13.5px;letter-spacing:1.05px"><span class="t" style="transform:scaleX(1.2);transform-origin:left center">/ /</span></div><div class="cbtn"><svg width="7" height="4" viewBox="0 0 7 4"><path d="M0 0h7L3.5 3.5z" fill="#000"/></svg></div></div>
<div class="sp" style="left:553px;width:146px"><span>Record 1 of 273</span></div>
<div class="sp" style="left:701px;width:65px"><span style="transform:none">View Mode</span></div>
<div class="sp" style="left:769px;width:66px"><span style="transform:scaleX(.93)">Ready...</span></div>
<svg style="position:absolute;left:841px;top:551px" width="13" height="13" viewBox="0 0 13 13"><path d="M12 1L1 12M12 5L5 12M12 9L9 12" stroke="#a0a0a0" stroke-width="1.2"/><path d="M13 1L2 12M13 5L6 12M13 9L10 12" stroke="#fff" stroke-width="1"/></svg>
</body></html>
